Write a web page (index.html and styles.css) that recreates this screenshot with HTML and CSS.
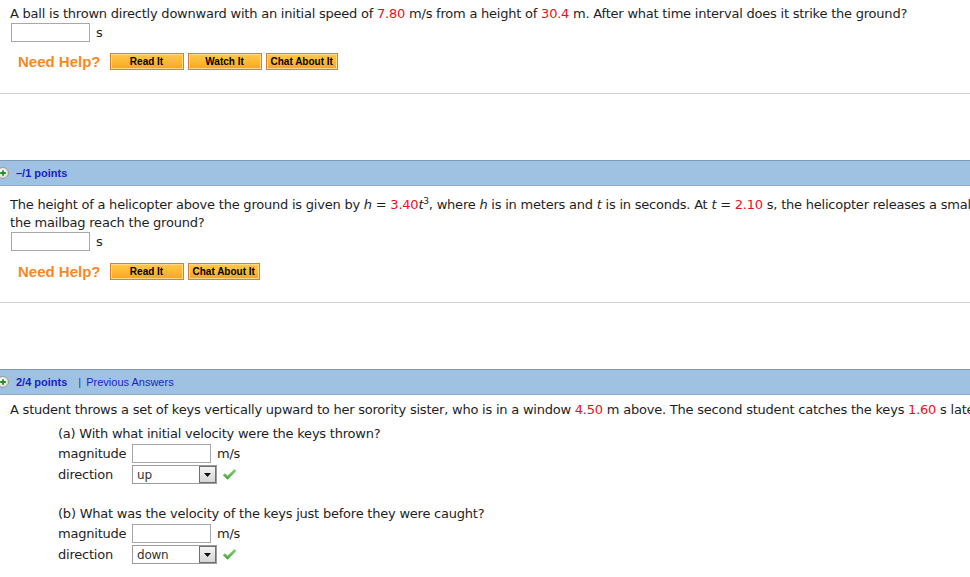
FILE: index.html
```html
<!DOCTYPE html>
<html>
<head>
<meta charset="utf-8">
<link rel="stylesheet" href="styles.css">
</head>
<body>
<div class="page">
  <section class="question q1">
    <div class="qbody">
      <div class="stem">A ball is thrown directly downward with an initial speed of <span class="num">7.80</span> m/s from a height of <span class="num">30.4</span> m. After what time interval does it strike the ground?</div>
      <div class="answer"><span class="field"></span><span class="unit">s</span></div>
      <div class="help">
        <span class="help-label">Need Help?</span>
        <span class="btn wide">Read It</span>
        <span class="btn wide">Watch It</span>
        <span class="btn">Chat About It</span>
      </div>
    </div>
  </section>

  <section class="question q2">
    <div class="qhead">
      <svg class="plus" width="16" height="16" viewBox="0 0 16 16"><defs><radialGradient id="g1" cx="0.4" cy="0.35" r="0.7"><stop offset="0" stop-color="#ffffff"/><stop offset="1" stop-color="#d4d4d4"/></radialGradient></defs><circle cx="8" cy="8" r="5.5" fill="url(#g1)" stroke="#9a9a9a" stroke-width="1"/><path d="M8 5.2v5.6M5.2 8h5.6" stroke="#1f8f1f" stroke-width="1.8"/></svg>
      <span class="pts">–/1 points</span>
    </div>
    <div class="qbody">
      <div class="stem">The height of a helicopter above the ground is given by <i>h</i> = <span class="num">3.40</span><i>t</i><sup>3</sup>, where <i>h</i> is in meters and <i>t</i> is in seconds. At <i>t</i> = <span class="num">2.10</span> s, the helicopter releases a small mailbag. How long after its release does<br>the mailbag reach the ground?</div>
      <div class="answer"><span class="field"></span><span class="unit">s</span></div>
      <div class="help">
        <span class="help-label">Need Help?</span>
        <span class="btn wide">Read It</span>
        <span class="btn">Chat About It</span>
      </div>
    </div>
  </section>

  <section class="question q3">
    <div class="qhead">
      <svg class="plus" width="16" height="16" viewBox="0 0 16 16"><defs><radialGradient id="g2" cx="0.4" cy="0.35" r="0.7"><stop offset="0" stop-color="#ffffff"/><stop offset="1" stop-color="#d4d4d4"/></radialGradient></defs><circle cx="8" cy="8" r="5.5" fill="url(#g2)" stroke="#9a9a9a" stroke-width="1"/><path d="M8 5.2v5.6M5.2 8h5.6" stroke="#1f8f1f" stroke-width="1.8"/></svg>
      <span class="pts">2/4 points</span>
      <span class="sep">|</span>
      <span class="prev">Previous Answers</span>
    </div>
    <div class="qbody">
      <div class="stem">A student throws a set of keys vertically upward to her sorority sister, who is in a window <span class="num">4.50</span> m above. The second student catches the keys <span class="num">1.60</span> s later.</div>
      <div class="part pa">
        <div class="part-title">(a) With what initial velocity were the keys thrown?</div>
        <div class="row"><span class="label">magnitude</span><span class="field"></span><span class="unit">m/s</span></div>
        <div class="row"><span class="label">direction</span>
          <span class="select"><span class="sel-val">up</span><span class="sel-btn"><svg width="7" height="4" viewBox="0 0 7 4"><path d="M0 0h7L3.5 4z" fill="#111"/></svg></span></span>
          <svg class="check" width="15" height="13" viewBox="0 0 15 13"><defs><linearGradient id="c1" x1="0" y1="0" x2="0" y2="1"><stop offset="0" stop-color="#8fd27a"/><stop offset="1" stop-color="#4aa03a"/></linearGradient></defs><path d="M0.8 7.2L3 5.2L5.6 7.8L12.4 1L14.4 3L5.6 11.8z" fill="url(#c1)"/></svg>
        </div>
      </div>
      <div class="part pb">
        <div class="part-title">(b) What was the velocity of the keys just before they were caught?</div>
        <div class="row"><span class="label">magnitude</span><span class="field"></span><span class="unit">m/s</span></div>
        <div class="row"><span class="label">direction</span>
          <span class="select"><span class="sel-val">down</span><span class="sel-btn"><svg width="7" height="4" viewBox="0 0 7 4"><path d="M0 0h7L3.5 4z" fill="#111"/></svg></span></span>
          <svg class="check" width="15" height="13" viewBox="0 0 15 13"><defs><linearGradient id="c2" x1="0" y1="0" x2="0" y2="1"><stop offset="0" stop-color="#8fd27a"/><stop offset="1" stop-color="#4aa03a"/></linearGradient></defs><path d="M0.8 7.2L3 5.2L5.6 7.8L12.4 1L14.4 3L5.6 11.8z" fill="url(#c2)"/></svg>
        </div>
      </div>
    </div>
  </section>
</div>
</body>
</html>
```

FILE: styles.css
```css
html, body {
  margin: 0;
  padding: 0;
  overflow: hidden;
  background: #ffffff;
}

body {
  font-family: "DejaVu Sans", Verdana, sans-serif;
  font-size: 13px;
  line-height: 18px;
  letter-spacing: -0.22px;
  color: #1e1e1e;
}

.page {
  width: 1300px;
}

.question {
  border-bottom: 1px solid #d2d2d2;
}

.question + .question {
  margin-top: 66px;
}

.q3 {
  border-bottom: none;
}

.qhead {
  display: flex;
  align-items: center;
  height: 24px;
  background: #9fc2e2;
  border-top: 1px solid #7e9bb8;
  border-bottom: 1px solid #8eaac4;
  font-family: "Liberation Sans", Arial, sans-serif;
  font-size: 11px;
  letter-spacing: 0;
  color: #1a1ec4;
}

.plus {
  margin-left: -5px;
  margin-right: 5px;
  flex: none;
}

.pts {
  font-weight: bold;
}

.sep {
  margin-left: 11px;
  margin-right: 5px;
  color: #2a3a9a;
}

.qbody {
  padding: 5px 0 23px 10px;
}

.q2 .qbody {
  padding-top: 10px;
  padding-bottom: 22px;
}

.q3 .qbody {
  padding-top: 6px;
}

.num {
  color: #e8101e;
}

i {
  font-style: italic;
}

sup {
  font-size: 9px;
  line-height: 0;
  vertical-align: 5px;
}

.answer {
  display: flex;
  align-items: center;
  height: 19px;
}

.field {
  display: inline-block;
  box-sizing: border-box;
  width: 79px;
  height: 19px;
  border: 1px solid #a8a8a8;
  background: #fff;
  margin-left: 1px;
  flex: none;
}

.unit {
  margin-left: 6px;
}

.help {
  display: flex;
  align-items: center;
  margin-top: 11px;
  padding-left: 8px;
  height: 17px;
  letter-spacing: 0;
}

.q2 .help {
  margin-top: 12px;
}

.help-label {
  font-family: "Liberation Sans", Arial, sans-serif;
  font-size: 15px;
  font-weight: bold;
  color: #f58a1f;
  margin-right: 9px;
}

.btn {
  display: inline-flex;
  align-items: center;
  justify-content: center;
  box-sizing: border-box;
  height: 17px;
  padding: 0 4px;
  margin-right: 4px;
  border: 1px solid #d7832a;
  box-shadow: inset 0 0 0 1px #ffd98a;
  background: linear-gradient(#ffc84c, #fdb52f 60%, #f4a524);
  font-family: "Liberation Sans", Arial, sans-serif;
  font-size: 10px;
  font-weight: bold;
  color: #000;
  line-height: 15px;
}

.btn.wide {
  width: 74px;
}

.part {
  margin-left: 48px;
}

.pa {
  margin-top: 6px;
}

.pb {
  margin-top: 20px;
}

.row {
  display: flex;
  align-items: center;
  height: 21px;
}

.label {
  width: 74px;
  flex: none;
}

.row .field {
  margin-left: 0;
}

.select {
  display: inline-flex;
  align-items: center;
  box-sizing: border-box;
  width: 85px;
  height: 19px;
  border: 1px solid #9c9c9c;
  background: #fff;
  flex: none;
}

.sel-val {
  flex: 1;
  padding-left: 4px;
  font-size: 12px;
  color: #333;
}

.sel-btn {
  display: flex;
  align-items: center;
  justify-content: center;
  box-sizing: border-box;
  width: 17px;
  height: 17px;
  border: 1px solid #6f6f6f;
  background: linear-gradient(#f4f4f4, #d6d6d6);
}

.check {
  margin-left: 5px;
  flex: none;
}
```
